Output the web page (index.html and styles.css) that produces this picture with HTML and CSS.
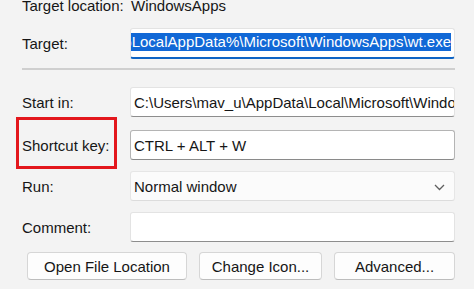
FILE: index.html
```html
<!DOCTYPE html>
<html>
<head>
<meta charset="utf-8">
<link rel="stylesheet" href="styles.css">
</head>
<body>
<div class="dialog">
  <div class="row loc">
    <div class="label">Target location:</div>
    <div class="value">WindowsApps</div>
  </div>
  <div class="row target">
    <div class="label">Target:</div>
    <div class="field focus"><span class="sel">%LocalAppData%\Microsoft\WindowsApps\wt.exe</span></div>
  </div>
  <div class="sep"></div>
  <div class="row start">
    <div class="label">Start in:</div>
    <div class="field"><span class="txt">C:\Users\mav_u\AppData\Local\Microsoft\WindowsApps</span></div>
  </div>
  <div class="row shortcut">
    <div class="label"><span class="mark"></span>Shortcut key:</div>
    <div class="field hover"><span class="txt">CTRL + ALT + W</span></div>
  </div>
  <div class="row run">
    <div class="label">Run:</div>
    <div class="field select"><span class="txt">Normal window</span>
      <svg class="chev" width="11" height="7" viewBox="0 0 11 7"><path d="M1 1 L5.5 5.5 L10 1" fill="none" stroke="#5f5f5f" stroke-width="1.3"/></svg>
    </div>
  </div>
  <div class="row comment">
    <div class="label">Comment:</div>
    <div class="field"></div>
  </div>
  <div class="buttons">
    <div class="btn b1">Open File Location</div>
    <div class="btn b2">Change Icon...</div>
    <div class="btn b3">Advanced...</div>
  </div>
</div>
</body>
</html>
```
FILE: styles.css
```css
html, body {
  margin: 0;
  padding: 0;
  background: #f3f3f3;
  width: 474px;
  height: 289px;
  overflow: hidden;
}
.dialog {
  font-family: "Liberation Sans", Arial, sans-serif;
  font-size: 15px;
  color: #161616;
  padding: 0 19px 0 22px;
  display: flex;
  flex-direction: column;
}
.row {
  display: grid;
  grid-template-columns: 108px 1fr;
  align-items: center;
}
.label {
  position: relative;
  white-space: nowrap;
}
.loc {
  margin-top: -4px;
  height: 20px;
  line-height: 20px;
}
.loc .value { padding-left: 1px; }
.field {
  height: 28px;
  background: #ffffff;
  border: 1px solid #e3e3e3;
  border-bottom-color: #8d8d8d;
  border-radius: 3px;
  box-sizing: border-box;
  display: flex;
  align-items: center;
  overflow: hidden;
  white-space: nowrap;
  position: relative;
}
.row .field { height: 30px; }
.txt { padding-left: 3px; }
.target { margin-top: 12px; }
.target .field {
  height: 31px;
  border-bottom: 2px solid #0d63c4;
  justify-content: flex-end;
  padding-right: 3px;
}
.sel {
  background: #1168d6;
  color: #ffffff;
  line-height: 18px;
  height: 18px;
  margin-top: -2px;
}
.sep {
  height: 2px;
  background: #cfcfcf;
  margin: 9px 0 0 0;
}
.start { margin-top: 17px; }
.shortcut { margin-top: 13px; }
.shortcut .field { border-color: #b4b4b4; border-bottom-color: #8a8a8a; }
.run { margin-top: 11px; }
.select {
  background: #fbfbfb;
  border-color: #e6e6e6;
  border-bottom-color: #dcdcdc;
}
.chev {
  position: absolute;
  right: 9px;
  top: 12px;
}
.comment { margin-top: 11px; }
.mark {
  position: absolute;
  left: -6px;
  top: -20px;
  width: 101px;
  height: 52px;
  box-sizing: border-box;
  border: 3px solid #e3171c;
}
.buttons {
  display: flex;
  margin-top: 10px;
  padding-left: 5px;
}
.btn {
  height: 28px;
  box-sizing: border-box;
  background: #fdfdfd;
  border: 1px solid #d6d6d6;
  border-bottom-color: #bdbdbd;
  border-radius: 4px;
  display: flex;
  align-items: center;
  justify-content: center;
  white-space: nowrap;
}
.b1 { width: 160px; }
.b2 { width: 123px; margin-left: 12px; }
.b3 { width: 121px; margin-left: 12px; }
```
